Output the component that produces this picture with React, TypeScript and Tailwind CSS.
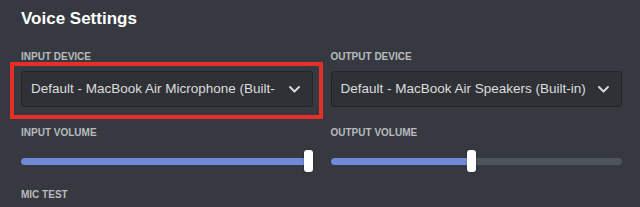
import React from 'react';

function Chevron() {
  return (
    <svg width="11" height="7" viewBox="0 0 11 7" className="shrink-0">
      <path d="M1 1l4.5 4.5L10 1" fill="none" stroke="#dcddde" strokeWidth="1.8" strokeLinecap="round" strokeLinejoin="round" />
    </svg>
  );
}

function Label({ children }: { children: React.ReactNode }) {
  return (
    <div className="text-[10px] leading-[12px] font-bold uppercase text-[#b9bbbe]">{children}</div>
  );
}

function Select({ value }: { value: string }) {
  return (
    <div className="mt-[8px] h-[36px] flex items-center justify-between gap-2 pl-[9px] pr-[12px] bg-[#2f3136] border border-[#222428] rounded-[3px]">
      <span className="text-[13.5px] text-[#dcddde] whitespace-nowrap overflow-hidden">{value}</span>
      <Chevron />
    </div>
  );
}

function Slider({ pct }: { pct: number }) {
  return (
    <div className="relative mt-[11px] h-[22px] flex items-center">
      <div className="w-full h-[7px] rounded-full bg-[#4f545c] overflow-hidden">
        <div className="h-full bg-[#7289da] rounded-full" style={{ width: `${pct}%` }} />
      </div>
      <div
        className="absolute top-0 w-[9px] h-[22px] bg-white rounded-[3px] shadow-[0_0_2px_rgba(0,0,0,0.4)]"
        style={{ left: `calc(${pct}% - 9px)` }}
      />
    </div>
  );
}

export default function App() {
  return (
    <div className="relative w-[640px] h-[207px] overflow-hidden bg-[#36393f] pl-[21px] pr-[18px] pt-[9px]" style={{ fontFamily: '"Liberation Sans", Arial, sans-serif' }}>
      <h2 className="text-[17px] leading-[20px] font-bold text-white">Voice Settings</h2>

      <div className="mt-[22px] grid grid-cols-2 gap-x-[18px]">
        <div>
          <Label>Input Device</Label>
          <Select value="Default - MacBook Air Microphone (Built-" />
          <div className="mt-[20px]">
            <Label>Input Volume</Label>
            <Slider pct={100} />
          </div>
        </div>
        <div>
          <Label>Output Device</Label>
          <Select value="Default - MacBook Air Speakers (Built-in)" />
          <div className="mt-[20px]">
            <Label>Output Volume</Label>
            <Slider pct={50} />
          </div>
        </div>
      </div>

      <div className="mt-[17px]">
        <Label>Mic Test</Label>
      </div>

      <div className="absolute left-[10px] top-[62px] w-[313px] h-[57px] border-[4px] border-[#e5302a] pointer-events-none" />
    </div>
  );
}
